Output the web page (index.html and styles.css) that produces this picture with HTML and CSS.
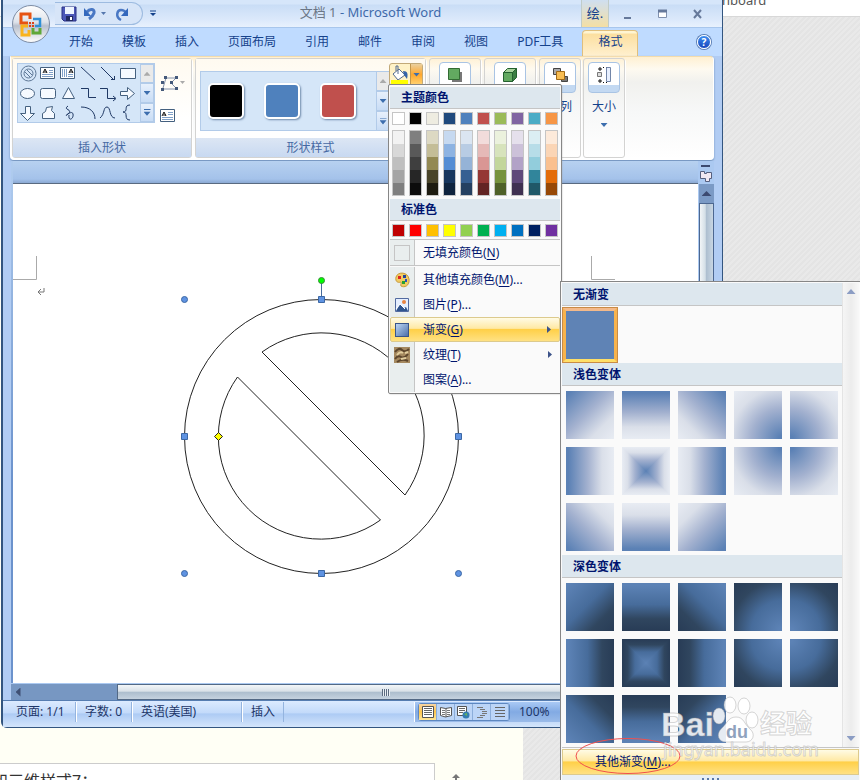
FILE: index.html
```html
<!DOCTYPE html>
<html lang="zh-CN">
<head>
<meta charset="utf-8">
<title>文档 1 - Microsoft Word</title>
<link rel="stylesheet" href="styles.css">
</head>
<body>
<div class="desktop">
  <div class="back-top">nboard</div>
  <div class="back-bottom">
    <div class="back-cream"><div class="back-box">和三维样式7：</div><svg class="back-arrow" width="10" height="6"><path d="M5 0l4 4H6v2H4V4H1z" fill="#777"/></svg></div>
  </div>

  <main class="window">
    <header class="titlebar">
      <div class="quick">
        <button aria-label="保存"><svg width="16" height="16"><path d="M1 1h14v14H3l-2-2z" fill="#4c57b8" stroke="#283184"/><path d="M4 1h9v7H4z" fill="#eef4ff"/><path d="M5 10h7v5H5z" fill="#222a62"/><path d="M9 11h2v3H9z" fill="#fff"/></svg></button>
        <button class="undo" aria-label="撤消"><svg width="16" height="16"><path d="M5 6c3-4 8-3 7 1-1 3-2 4-5 6" fill="none" stroke="#4a78c4" stroke-width="3"/><path d="M2 2v8h7z" fill="#3468bd"/></svg></button>
        <button class="tiny" aria-label="撤消列表"><svg width="5" height="3"><path d="M0 0h5L2.500 3z" fill="#5577ad"/></svg></button>
        <button aria-label="恢复"><svg width="16" height="16"><path d="M7 14C1 11 3 4 7 4c3 0 4 1 5 3" fill="none" stroke="#4a78c4" stroke-width="2.500"/><path d="M14 2v8H7z" fill="#3468bd"/></svg></button>
      </div>
      <button class="quick-more" aria-label="自定义"><svg width="6" height="7"><path d="M0 1h6" stroke="#15428b"/><path d="M0 3h6L3 6z" fill="#15428b"/></svg></button>
      <h1><span>文档 1</span> - Microsoft Word</h1>
      <span class="context">绘.</span>
      <div class="controls">
        <button aria-label="最小化"><svg width="9" height="12"><path d="M1 10h7" stroke="#66799b" stroke-width="2"/></svg></button>
        <button aria-label="最大化"><svg width="9" height="12"><path d="M.5 2.500h8v7h-8z" fill="#fff" stroke="#8090ad"/><path d="M0 3h9" stroke="#66799b" stroke-width="3"/></svg></button>
        <button aria-label="关闭"><svg width="9" height="12"><path d="M1 2l7 8M8 2L1 10" stroke="#66799b" stroke-width="2"/></svg></button>
      </div>
    </header>
    <button class="office" aria-label="Office 按钮"><svg width="40" height="40" viewBox="0 0 40 40">
      <defs><linearGradient id="orb" x2="0" y2="1"><stop stop-color="#fff"/><stop offset=".45" stop-color="#dfe3ea"/><stop offset=".55" stop-color="#b9c0cd"/><stop offset="1" stop-color="#fff"/></linearGradient></defs>
      <circle cx="20" cy="20" r="18.500" fill="url(#orb)" stroke="#7e8da5"/>
      <g fill="none" stroke-width="3"><path d="M17 19H10V10H19V15" stroke="#e65312"/><path d="M22 15h7v7h-5" stroke="#2f8fd6" stroke-width="2.500"/><path d="M17 22h-6v9h7v-5" stroke="#f9b31c"/><path d="M22 24v5h7v-5" stroke="#5fa838"/></g>
      <path d="M18 18h2v2h-2zM21 18h2v2h-2zM18 21h2v2h-2zM21 21h2v2h-2z" fill="#d8441a"/>
    </svg></button>

    <nav class="tabs">
      <a href="#">开始</a><a href="#">模板</a><a href="#">插入</a><a href="#">页面布局</a><a href="#">引用</a><a href="#">邮件</a><a href="#">审阅</a><a href="#">视图</a><a href="#">PDF工具</a><a href="#" class="active">格式</a>
      <button class="help" aria-label="帮助">?</button>
    </nav>

    <section class="ribbon">
      <div class="group shapes">
        <div class="group-body">
          <div class="gallery">
            <svg width="122" height="58" fill="none" stroke="#44607f">
              <g stroke="#5d7796"><circle cx="10.500" cy="9.500" r="7.500"/><circle cx="10.500" cy="9.500" r="4.500"/><path d="M7 8l5 5M9 6l5 5"/></g>
              <g fill="#fff"><path d="M22.500 3.500h14v11h-14zM42.500 3.500h14v11h-14z"/></g>
              <path d="M31 6.500h4M31 8.500h4M24 10.500h11M24 12.500h11M44.500 5v8M46.500 5v8M48.500 5v8M50 10.500h5M50 12.500h5" stroke="#7fa0c8"/>
              <path d="M25 9l2-4 2 4M26 8h3M51 9l2-4 2 4M52 8h3" stroke="#111"/>
              <path d="M63 3l14 13M83 3l13 13M96.500 16v-4M97 15.500h-4" stroke="#1f3864"/>
              <g fill="#f6faff"><path d="M102.500 4.500h15v10h-15z"/><ellipse cx="9.500" cy="29.500" rx="7" ry="5"/><rect x="22.500" y="24.500" width="15" height="10" rx="2"/><path d="M44.500 34.500l6-11 6 11zM102.500 27.500h7v-4l7 6-7 6v-4h-7zM7.500 42.500h5v7h4l-7 7-7-7h5zM24.500 54.500v-5l3-2 1-4 6-1-1 4 3 3v5z"/></g>
              <path d="M63 24.500h7.500v9H78M82 24.500h7.500v10H97M95 32l3 2.500-3 2.500M50 42c-6 4 6 3 0 8s4-5 5 0-5 8-4 1M63 43c9 0 14 5 14 12M82 54c5-4 3-11 7-11s2 11 8 11M112 41c-7 0-1 7-7 7 6 0 0 8 7 8" stroke="#1f3864"/>
            </svg>
            <div class="spin"><button disabled aria-label="上"><i class="up"></i></button><button aria-label="下"><i></i></button><button aria-label="更多"><i class="more"></i></button></div>
          </div>
          <div class="edit">
            <button aria-label="编辑形状"><svg width="26" height="16"><path d="M3 13L6 3h10l-5 5 6 6M3 14h14" fill="none" stroke="#8492aa"/><path d="M4 1h3v3H4zM15 1h3v3h-3zM1 6h3v3H1zM10 6h3v3h-3zM1 13h3v3H1zM15 12h3v3h-3z" fill="#44597a"/><path d="M20 6h5l-2.500 3z" fill="#aaa"/></svg></button>
            <button aria-label="文本框"><svg width="15" height="13"><path d="M.5.5h14v12H.5z" fill="#fff" stroke="#44607f"/><path d="M8 3.500h5M8 5.500h5M2 8.500h11M2 10.500h11" stroke="#7fa0c8"/><path d="M2 7l2-4 2 4M3 6h3" fill="none" stroke="#111"/></svg></button>
          </div>
        </div>
        <h2>插入形状</h2>
      </div>
      <div class="group styles">
        <div class="group-body">
          <div class="style-list"><button class="black" aria-label="黑色"></button><button class="blue" aria-label="蓝色"></button><button class="red" aria-label="红色"></button>
            <div class="spin"><button disabled aria-label="上"><i class="up"></i></button><button aria-label="下"><i></i></button><button aria-label="更多"><i class="more"></i></button></div>
          </div>
          <div class="fill">
            <button class="bucket" aria-label="形状填充"><svg width="20" height="20"><path d="M3 9l6-5 6 6-7 5z" fill="#fff" stroke="#526b8f"/><path d="M8 9V1h-2v5" fill="none" stroke="#526b8f"/><path d="M13 6c5 0 5 3 4 8l-3-4z" fill="#3463a8"/><path d="M1 15h17v4H1z" fill="#ff0"/></svg></button><button class="fill-open" aria-label="打开填充菜单"><i></i></button>
          </div>
        </div>
        <h2>形状样式</h2>
      </div>
      <div class="group narrow"><button class="big" aria-label="阴影效果"><svg width="16" height="16"><path d="M5 5h10v10H5z" fill="#777"/><path d="M1.500 1.500h11v11h-11z" fill="#62a960" stroke="#336b33"/></svg></button></div>
      <div class="group narrow"><button class="big" aria-label="三维效果"><svg width="16" height="16" stroke="#24612f"><path d="M1.500 5.500h9v9h-9z" fill="#62a960"/><path d="M1.500 5.500l4-4h9l-4 4z" fill="#a7d29b"/><path d="M10.500 5.500l4-4v9l-4 4z" fill="#3b7f43"/></svg></button></div>
      <div class="group arrange"><button class="big" aria-label="排列"><svg width="16" height="16" stroke="#444"><path d="M1.500 1.500h7v6h-7z" fill="#aaa"/><path d="M9.500 9.500h6v5h-6z" fill="#777"/><path d="M4.500 4.500h8v8h-8z" fill="#f8bd51" stroke="#a26a15"/></svg></button><span>排列</span></div>
      <div class="group size"><button class="big" aria-label="大小"><svg width="16" height="18"><path d="M4 1v4M2 3h4M4 13v4M2 15h4" stroke="#111"/><path d="M7 1.500h6M7 16.500h6" stroke="#111" stroke-dasharray="1 2"/><path d="M1.500 6.500h4v4h-4z" fill="#ddd" stroke="#777"/><path d="M10.500 1.500h4v14h-4z" fill="#e8f0ff" stroke="#7386a8"/></svg></button><span>大小</span><i></i></div>
    </section>

    <section class="workspace">
      <div class="page-top"></div>
      <svg class="ruler-icon" width="16" height="23"><path d="M3 5h9" stroke="#3c4a70" stroke-width="2"/><path d="M2.500 10.500h4v2h2v-1h5v6h-2v3h-4v-3h-5z" fill="#f0e8f2" stroke="#56607f"/></svg>
      <div class="page">
        <svg class="drawing" width="100%" height="100%" fill="none" stroke="#222">
          <path d="M23.500 72v23.500H0M578.500 72v23.500H602" stroke="#aaa"/>
          <path d="M25 108h6v-4M28 105l-3 3 3 3" stroke="#777"/>
          <circle cx="308.500" cy="252.500" r="137"/>
          <path d="M249 168A102.500 102.500 0 0 1 392 311zM224.500 193A102.500 102.500 0 0 0 367.500 336z"/>
          <path d="M308.500 97v16" stroke="#456a9c"/>
          <g fill="#5f93e2" stroke="#3c68a5"><circle cx="171.500" cy="115.500" r="3"/><circle cx="171.500" cy="389.500" r="3"/><circle cx="445.500" cy="389.500" r="3"/><path d="M305.500 112.500h6v6h-6zM168.500 249.500h6v6h-6zM442.500 249.500h6v6h-6zM305.500 386.500h6v6h-6z"/></g>
          <circle cx="308.500" cy="96.500" r="3" fill="#0f0" stroke="#378a37"/>
          <path d="M205.500 248.500l4 4-4 4-4-4z" fill="#ff0" stroke="#222"/>
        </svg>
      </div>
      <div class="vscroll"><button aria-label="向上滚动"><i class="up"></i></button><div class="vthumb"></div></div>
      <div class="hscroll"><button aria-label="向左滚动"><i></i></button><div class="hthumb"><i></i></div></div>
    </section>

    <footer class="status">
      <span class="st-page">页面: 1/1</span><span class="st-words">字数: 0</span><span class="st-lang">英语(美国)</span><span class="st-insert">插入</span>
      <div class="views">
        <div class="view-buttons">
          <button class="on" aria-label="页面视图"><svg width="12" height="12"><path d="M.5.5h11v11H.5z" fill="#fff" stroke="#555"/><path d="M2 2.500h8M2 4.500h8M2 6.500h8M2 8.500h8" stroke="#666"/></svg></button>
          <button aria-label="阅读版式"><svg width="12" height="12"><path d="M.5 1.500l5 1 6-1v8l-6 1.500-5-1.500zM6 2v9" fill="#fff" stroke="#555"/><path d="M2 4.500h3M2 6.500h3M2 8.500h3M7 4.500h3M7 6.500h3M7 8.500h3" stroke="#777"/></svg></button>
          <button aria-label="Web 版式"><svg width="13" height="13"><path d="M.5.5h9v9h-9z" fill="#fff" stroke="#555"/><path d="M2 2.500h6M2 4.500h6M2 6.500h4" stroke="#666"/><circle cx="9" cy="9" r="3.500" fill="#347cb1"/><path d="M7 8l3-1v3z" fill="#65b45a"/></svg></button>
          <button aria-label="大纲"><svg width="12" height="12"><path d="M1 1.500h6M4 3.500h5M6 5.500h5M6 7.500h5M4 9.500h5M1 11.500h6" stroke="#777"/></svg></button>
          <button aria-label="普通"><svg width="12" height="12"><path d="M1 1.500h10M1 4.500h10M1 7.500h10M1 10.500h10" stroke="#666"/></svg></button>
        </div>
        <span>100%</span>
      </div>
    </footer>
  </main>

  <div class="menu color-menu">
    <h3>主题颜色</h3>
    <div class="swatches" id="theme"></div>
    <div class="ramps" id="ramps"></div>
    <h3>标准色</h3>
    <div class="swatches" id="standard"></div>
    <button class="item none"><span class="ico"><i class="empty"></i></span><span>无填充颜色(<u>N</u>)</span></button>
    <button class="item"><span class="ico"><svg width="16" height="16"><path d="M2 5C4-1 14 0 15 7s-5 9-8 7c-1-2 1-3 0-4-3 1-6 0-5-5z" fill="#f1cc63" stroke="#c79a3c"/><path d="M4 4h3v3H4z" fill="#d22"/><path d="M9 3h3v3H9z" fill="#249"/><path d="M11 7h2v3h-2z" fill="#284fc2"/><path d="M8 9h3v3H8z" fill="#27a32e"/></svg></span><span>其他填充颜色(<u>M</u>)...</span></button>
    <button class="item"><span class="ico"><svg width="14" height="14"><path d="M.5.5h13v13H.5z" fill="#e5efff" stroke="#526ba0"/><path d="M1 13l4-7 4 4 2-1 2 4z" fill="#30558f"/><path d="M1 11l4-5 5 5" fill="none" stroke="#fff"/><circle cx="9" cy="4" r="2" fill="#e98543"/></svg></span><span>图片(<u>P</u>)...</span></button>
    <button class="item hot"><span class="ico"><i class="grad"></i></span><span>渐变(<u>G</u>)</span><b></b></button>
    <button class="item"><span class="ico"><svg width="16" height="16"><path d="M0 0h16v16H0z" fill="#a58960"/><path d="M1 5q4-5 7-2t7-1M1 12q3-4 6-2t7-3M3 15q5-4 11-1" fill="none" stroke="#5c452c" stroke-width="2"/><path d="M3 8q3-4 6-2M7 12l5-1M11 6l3-1" stroke="#e3cf9f" fill="none" stroke-width="2"/></svg></span><span>纹理(<u>T</u>)</span><b></b></button>
    <button class="item"><span class="ico"></span><span>图案(<u>A</u>)...</span></button>
  </div>

  <div class="menu gradient-menu">
    <div class="gradient-main">
      <div class="gradient-list">
        <h3>无渐变</h3>
        <div class="plain"><button aria-label="无渐变"></button></div>
        <h3>浅色变体</h3>
        <div class="tiles light"></div>
        <h3>深色变体</h3>
        <div class="tiles dark"></div>
      </div>
      <div class="menu-scroll"><i class="up"></i><i></i></div>
    </div>
    <button class="more-gradients">其他渐变(<u>M</u>)...</button>
    <div class="grip"><i></i><i></i><i></i><i></i></div>
  </div>

  <svg class="red-ring" width="108" height="38"><ellipse cx="53" cy="18" rx="52" ry="17.500" fill="none" stroke="#f0504e"/></svg>
  <svg class="watermark" width="160" height="80" viewBox="0 0 160 80">
    <g fill="#fff" fill-opacity=".85" stroke="#999" stroke-opacity=".4">
      <text class="wm-bai" x="1" y="49">Bai</text>
      <ellipse cx="59" cy="29" rx="6" ry="8"/><ellipse cx="70" cy="18" rx="6" ry="8"/><ellipse cx="84" cy="19" rx="6" ry="8"/><ellipse cx="92" cy="33" rx="6" ry="8"/>
      <path d="M76 30c8 0 8 7 14 12 6 5 3 13-4 13H66c-8 0-10-8-5-13 6-5 7-12 15-12z"/>
      <text class="wm-exp" x="100" y="46">经验</text>
      <text class="wm-url" x="3" y="69">jingyan.baidu.com</text>
    </g>
    <text class="wm-du" x="66" y="51">du</text>
  </svg>
</div>
<script src="app.js"></script>
</body>
</html>
```
FILE: app.js
```js
const theme = ['#ffffff', '#000000', '#eeece1', '#1f497d', '#4f81bd', '#c0504d', '#9bbb59', '#8064a2', '#4bacc6', '#f79646'];
const standard = ['#c00000', '#ff0000', '#ffc000', '#ffff00', '#92d050', '#00b050', '#00b0f0', '#0070c0', '#002060', '#7030a0'];
const ramps = [
  ['#f2f2f2', '#d8d8d8', '#bfbfbf', '#a5a5a5', '#7f7f7f'],
  ['#7f7f7f', '#595959', '#3f3f3f', '#262626', '#0c0c0c'],
  ['#ddd9c3', '#c4bd97', '#938953', '#494429', '#1d1b10'],
  ['#c6d9f0', '#8db3e2', '#548dd4', '#17365d', '#0f243e'],
  ['#dbe5f1', '#b8cce4', '#95b3d7', '#366092', '#244061'],
  ['#f2dcdb', '#e5b9b7', '#d99694', '#953734', '#632423'],
  ['#ebf1dd', '#d7e3bc', '#c3d69b', '#76923c', '#4f6128'],
  ['#e5e0ec', '#ccc1d9', '#b2a2c7', '#5f497a', '#3f3151'],
  ['#dbeef3', '#b7dde8', '#92cddc', '#31859b', '#205867'],
  ['#fdeada', '#fbd5b5', '#fac08f', '#e36c09', '#974806']
];

function colorButton(color) {
  const b = document.createElement('button');
  b.style.background = color;
  b.setAttribute('aria-label', color);
  return b;
}

theme.forEach(c => document.getElementById('theme').append(colorButton(c)));
standard.forEach(c => document.getElementById('standard').append(colorButton(c)));
ramps.forEach(list => {
  const col = document.createElement('div');
  list.forEach(c => col.append(colorButton(c)));
  document.getElementById('ramps').append(col);
});

// Where each tile's base colour starts, in reading order.
const kinds = ['tl', 't', 'tr', 'r-br', 'r-bl', 'l', 'center', 'r', 'r-tr', 'r-tl', 'bl', 'b', 'br'];
document.querySelectorAll('.tiles').forEach(box => {
  kinds.forEach(kind => {
    const b = document.createElement('button');
    b.className = 'tile ' + kind;
    b.setAttribute('aria-label', kind);
    box.append(b);
  });
});
```
FILE: styles.css
```css
* { box-sizing: border-box; }
body { margin: 0; overflow: hidden; font: 12px/16px "Noto Sans", "Noto Sans CJK SC", sans-serif; color: #15428b; }
button { border: 0; padding: 0; margin: 0; background: none; font: inherit; color: inherit; display: flex; align-items: center; justify-content: center; }
svg { display: block; flex: none; }
h1, h2, h3 { margin: 0; font-size: 12px; font-weight: 400; }
a { color: inherit; text-decoration: none; }
u { text-underline-offset: 2px; }

.desktop { position: relative; height: 100vh; overflow: hidden; display: flex; flex-direction: column; justify-content: space-between; background: repeating-linear-gradient(135deg, #e4e4e4 0 2px, #e9e9e9 2px 4px); }
.back-top { height: 17px; flex: none; background: #fff; border-bottom: 1px solid #d8d8d8; padding-left: 722px; font-size: 13px; line-height: 0; color: #555; }
.back-bottom { flex: 1; display: flex; }
.back-cream { width: 523px; background: #fffff5; display: flex; align-items: flex-end; }
.back-box { width: 435px; height: 17px; padding-top: 5px; border: 1px solid #ccc; border-left: 0; border-bottom: 0; background: #fff; color: #333; font-size: 16px; line-height: 24px; overflow: hidden; text-indent: -8px; }
.back-arrow { margin-left: 16px; }

.window { position: absolute; left: 1px; right: 137px; top: 0; bottom: 52px; display: flex; flex-direction: column; background: #b1ccf3; border: 1px solid #33557f; border-left-width: 2px; border-top: 0; border-radius: 0 0 6px 6px; box-shadow: inset 0 -1px #d2e3fa; }
.titlebar { height: 28px; flex: none; display: flex; align-items: center; background: linear-gradient(#d6e6fa 0 4px, #c9ddf6 5px, #dce9fb 20px, #e8f1fd); border-bottom: 1px solid #a8c6ec; padding-left: 52px; }
.quick { height: 23px; width: 88px; display: flex; align-items: center; gap: 5px; padding-left: 6px; border: 1px solid #9dbbe0; border-left: 0; border-radius: 0 12px 12px 0; background: #d7e5f8; }
.quick .tiny { margin-right: 3px; margin-left: -2px; }
.quick-more { margin-left: 7px; }
h1 { flex: 1; padding-left: 4px; text-align: center; line-height: 24px; color: #3e6aaa; font-size: 13px; height: 27px; }
h1 span { color: #6b7686; }
.context { align-self: stretch; width: 28px; padding-top: 5px; text-align: center; font-size: 13px; background: linear-gradient(#cfdff0, #f4dfa4); border: 1px solid #c0ccc9; border-width: 0 1px; }
.controls { width: 113px; display: flex; justify-content: space-between; padding: 0 20px 0 14px; }
.office { position: absolute; left: 8px; top: 4px; }

.tabs { height: 28px; flex: none; display: flex; gap: 1px; padding: 2px 11px 0 52px; background: #bfdbff; line-height: 24px; }
.tabs a { padding: 0 14px; white-space: nowrap; }
.tabs .active { padding: 0 15px; margin-left: 4px; border: 1px solid #e0bf7d; border-bottom: 0; border-radius: 4px 4px 0 0; background: linear-gradient(#fff5d2 0 2px, #fcdf9f 3px, #fff0cf); line-height: 22px; }
.help { margin: 5px 0 0 auto; width: 14px; height: 14px; border-radius: 50%; background: linear-gradient(#3c8df0, #1746bd); border: 1px solid #fff; box-shadow: 0 0 0 1px #5c7fb5; color: #fff; font-weight: 700; font-size: 10px; line-height: 12px; }

.ribbon { height: 104px; flex: none; margin: 0 8px 0 7px; display: flex; gap: 3px; padding: 1px 2px 1px 1px; border: 1px solid #fff; border-top-color: #f3dcad; border-radius: 0 4px 4px 4px; background: linear-gradient(#fff0d2, #fefaf0 12px, #f1f1ee 25px, #f7f8f8 55px, #fff); box-shadow: 0 1px 2px #6587b2; }
.group { display: flex; flex-direction: column; align-items: center; border: 1px solid #d3d3d2; border-radius: 3px; box-shadow: 1px 1px #fff; }
.group h2 { align-self: stretch; text-align: center; height: 19px; line-height: 20px; color: #4669a3; background: linear-gradient(#dce6f4, #c8d9f1); }
.group-body { flex: 1; align-self: stretch; display: flex; }
.shapes { width: 180px; }
.shapes .group-body { padding: 4px 6px 0 4px; gap: 5px; background: linear-gradient(#fffaf0, #fff 60px); }
.gallery, .style-list { display: flex; height: 60px; background: #d5e6f8; border: 1px solid #b2cbe9; }
.spin { width: 14px; display: grid; grid-template-rows: 1fr 1fr 1fr; }
.spin button { border: 1px solid #b2cbe9; background: linear-gradient(#e7f0fc, #c8dcf5); }
.spin button:disabled { background: #eaeaea; }
i { display: block; }
.spin i, .size i, .fill i { width: 7px; height: 4px; background: #3d6eae; clip-path: polygon(0 0, 100% 0, 50% 100%); }
.spin .up { background: #aaa; clip-path: polygon(50% 0, 100% 100%, 0 100%); }
.spin .more { width: 7px; height: 7px; clip-path: polygon(0 0, 100% 0, 100% 15%, 0 15%, 0 40%, 100% 40%, 50% 100%, 0 40%); }
.edit { display: flex; flex-direction: column; align-items: flex-start; gap: 18px; padding-top: 12px; }
.styles { width: 231px; }
.styles .group-body { padding: 4px 3px 0 4px; gap: 3px; align-items: flex-start; background: linear-gradient(#fffaf0, #fff 60px); }
.style-list { margin-top: 8px; width: 186px; align-items: center; gap: 20px; padding-left: 7px; }
.style-list > button { flex: none; width: 36px; height: 36px; border: 2px solid #fff; border-radius: 5px; box-shadow: 1px 1px 2px #708bab; }
.black { background: #000; }
.blue { background: #4f81bd; }
.red { background: #c0504d; }
.style-list .spin { align-self: stretch; flex: none; margin: -1px -1px -1px auto; }
.fill { display: flex; height: 23px; border: 1px solid #c2a978; border-radius: 3px; background: #fff2c7; }
.bucket { width: 20px; }
.fill-open { width: 12px; border-left: 1px solid #c2974e; background: linear-gradient(#ead09f, #ffa72d, #ffd474); }
.narrow { width: 52px; padding-top: 3px; }
.arrange { width: 42px; padding-top: 3px; }
.size { width: 42px; padding-top: 3px; margin-left: -1px; }
.big { width: 32px; height: 31px; flex: none; padding-bottom: 6px; border: 1px solid #a9c4e4; border-radius: 4px; background: linear-gradient(#fff 0 22px, #c3d9f2 22px); }
.group span { margin-top: 6px; line-height: 16px; }
.size i { margin-top: 8px; }

.workspace { flex: 1; min-height: 0; display: grid; grid-template-columns: 1fr 16px; grid-template-rows: 23px 1fr 17px; margin: 1px 8px 0; background: linear-gradient(#b1cdef, #6b92cc 320px); }
.page-top { margin-left: 2px; background: linear-gradient(#b7d1f0, #a4c2ea 18px, #8ba9d3); border-bottom: 1px solid #596a80; }
.ruler-icon { background: #abc9f1; }
.page { margin-left: 2px; background: #fff; min-width: 0; min-height: 0; }
.vscroll { display: flex; flex-direction: column; background: #7b9ac5; border-left: 1px solid #abc9f1; }
.vscroll button { height: 19px; }
.vscroll .up { width: 10px; height: 5px; background: #3c4a70; clip-path: polygon(50% 0, 100% 100%, 0 100%); }
.vthumb { flex: 1; border: 1px solid #4c6790; background: linear-gradient(90deg, #f2f5f7, #d4dfe7 40%, #aebfd0 50%, #c8d6e3); }
.hscroll { grid-column: 1 / -1; display: flex; background: #7797c2; border-top: 1px solid #abc9f1; }
.hscroll button { width: 14px; }
.hscroll button i { width: 5px; height: 9px; background: #405174; clip-path: polygon(0 50%, 100% 0, 100% 100%); }
.hthumb { flex: 1; margin-left: 92px; display: flex; align-items: center; justify-content: center; border: 1px solid #536985; background: linear-gradient(#f4f7f8, #d9e1e8 45%, #acbdcd 50%, #c5d2df); }
.hthumb i { width: 8px; height: 7px; background: repeating-linear-gradient(90deg, #5b6b80 0 1px, #e8eef3 1px 2px); margin-right: 59px; }

.status { height: 27px; flex: none; display: flex; align-items: stretch; border-top: 1px solid #567db1; padding: 1px 0 5px 5px; background: linear-gradient(#dcebff, #c3dafa 45%, #adcbf4 50%, #d4e5fb); line-height: 20px; color: #1d3668; }
.status > span { padding-left: 8px; border-right: 1px solid #94b4df; white-space: nowrap; }
.st-page { width: 68px; }
.st-words, .st-lang, .st-insert { border-left: 1px solid #fff; }
.st-words { width: 56px; }
.st-lang { width: 110px; }
.st-insert { width: 42px; }
.views { margin-left: auto; width: 308px; display: flex; gap: 9px; border-left: 1px solid #fff; background: linear-gradient(#a9c9f5, #82aae3 50%, #9abbe9); padding: 1px 0 0 3px; line-height: 18px; }
.view-buttons { display: flex; width: 92px; height: 18px; border: 1px solid #5d87c0; border-radius: 3px; background: #bcd5f7; }
.view-buttons button { flex: 1; border-right: 1px solid #8caedb; }
.view-buttons .on { background: linear-gradient(#f7d4a4, #ffc64d 50%, #ffe698); }

.menu { position: absolute; background: #fafafa; border: 1px solid #868686; color: #00156e; }
.menu h3 { height: 22px; padding-left: 11px; line-height: 22px; font-weight: 700; background: #dde7ee; border-bottom: 1px solid #c5c5c5; }
.color-menu { left: 388px; top: 84px; width: 174px; padding: 2px 1px 1px; border-radius: 2px; box-shadow: 1px 1px 1px #9993; }
.swatches { display: flex; gap: 4px; padding: 3px 2px 2px; }
.swatches button { width: 13px; height: 13px; border: 1px solid #c5c5c5; }
.ramps { display: flex; gap: 4px; padding: 3px 2px; }
.ramps div { width: 13px; border: 1px solid #c5c5c5; }
.ramps button { width: 100%; height: 13px; }
.ramps button:last-child { height: 12px; }
.item { width: 100%; height: 25px; justify-content: flex-start; gap: 9px; background: linear-gradient(90deg, #e9eeee 24px, #c5c5c5 24px 25px, transparent 25px); }
.ico { width: 24px; display: flex; justify-content: center; }
.item.none { height: 27px; border: 1px solid #c5c5c5; border-width: 1px 0; margin-bottom: 1px; }
.empty { width: 16px; height: 16px; border: 1px solid #c5c5c5; background: #e9eeee; }
.grad { width: 14px; height: 14px; border: 1px solid #39558a; background: linear-gradient(135deg, #bcd6f5, #4e70a9); }
.item.hot { border: 1px solid #dcca8d; border-radius: 2px; background: linear-gradient(#fffbe5, #ffe9a4 45%, #ffd048 50%, #ffe183); }
.item.hot .ico { margin-left: -1px; }
.item b { margin: 0 8px 0 auto; width: 4px; height: 7px; background: #3c5389; clip-path: polygon(0 0, 100% 50%, 0 100%); }

.gradient-menu { left: 560px; right: -1px; top: 281px; bottom: -1px; padding: 1px 1px 0; }
.gradient-main { display: flex; border-bottom: 1px solid #c5c5c5; }
.gradient-list { width: 280px; }
.gradient-list h3 { height: 23px; line-height: 24px; }
.plain { height: 57px; padding-top: 1px; }
.plain button { width: 56px; height: 56px; border: 4px solid #f7b34d; border-top-color: #f3b98a; border-bottom-color: #ffdf68; outline: 1px solid #c98b46; outline-offset: -1px; background: #5f83b5; }
.tiles { display: grid; grid-template-columns: repeat(5, 48px); gap: 8px; padding: 5px 4px 4px; height: 169px; align-content: start; }
.light { --from: #5b81b5; --mid: #a3b1cf; --late: #dadfe9; --to: #e8ecf3; }
.dark { --from: #5c82b5; --mid: #476c9b; --late: #30465f; --to: #283c56; }
.tile { width: 48px; height: 48px; --stops: var(--from) 5%, var(--mid) 45%, var(--late) 75%, var(--to); background: linear-gradient(var(--angle), var(--stops)); }
.tl { --angle: 135deg; }
.t { --angle: 180deg; }
.tr { --angle: 225deg; }
.l { --angle: 90deg; }
.r { --angle: 270deg; }
.bl { --angle: 45deg; }
.b { --angle: 0deg; }
.br { --angle: 315deg; }
.r-br { background: radial-gradient(circle farthest-corner at 100% 100%, var(--stops)); }
.r-bl { background: radial-gradient(circle farthest-corner at 0 100%, var(--stops)); }
.r-tr { background: radial-gradient(circle farthest-corner at 100% 0, var(--stops)); }
.r-tl { background: radial-gradient(circle farthest-corner at 0 0, var(--stops)); }
.center { --cross: var(--to), var(--late) 12%, var(--mid) 27%, var(--from) 50%, var(--mid) 73%, var(--late) 88%, var(--to); background: linear-gradient(90deg, var(--cross)); }
.center::before { content: ""; width: 48px; height: 48px; background: linear-gradient(var(--cross)); clip-path: polygon(0 0, 100% 0, 0 100%, 100% 100%); }
.menu-scroll { flex: 1; display: flex; flex-direction: column; justify-content: space-between; align-items: center; padding: 6px 0; border-left: 1px solid #e4e4e4; background: linear-gradient(90deg, #f5f5f5, #ececec, #f8f8f8); }
.menu-scroll i { width: 9px; height: 5px; background: #8c9dc4; clip-path: polygon(0 0, 100% 0, 50% 100%); }
.menu-scroll .up { clip-path: polygon(50% 0, 100% 100%, 0 100%); }
.more-gradients { width: 100%; height: 26px; margin-top: 1px; padding-left: 32px; justify-content: flex-start; border: 1px solid #dcca8d; background: linear-gradient(#fffbe5, #ffe9a4 45%, #ffd048 50%, #ffe183); }
.grip { height: 8px; display: flex; justify-content: center; gap: 3px; padding-top: 3px; background: #e8eff5; }
.grip i { width: 2px; height: 2px; background: #5877a8; }

.red-ring { position: absolute; left: 575px; top: 738px; }
.watermark { position: absolute; left: 660px; top: 687px; }
.wm-bai { font: 700 34px "Liberation Sans", sans-serif; }
.wm-exp { font: 700 26px "Noto Sans CJK SC", sans-serif; }
.wm-url { font: 18px "Noto Sans", sans-serif; }
.wm-du { font: 700 18px "Liberation Sans", sans-serif; fill: #8fa2bd; }
```
